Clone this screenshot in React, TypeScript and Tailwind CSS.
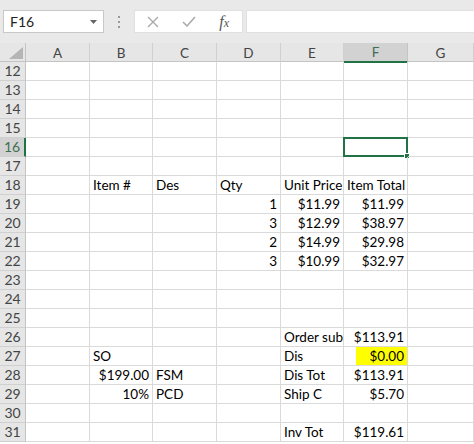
import React from 'react';

const COLS = ['A', 'B', 'C', 'D', 'E', 'F', 'G'];
const GRID = 'grid grid-cols-[26px_64px_63px_64px_64px_63px_64px_1fr]';

type Cell = { v: string; right?: boolean; yellow?: boolean };
type RowData = { [col: string]: Cell };

const data: { [row: number]: RowData } = {
  18: {
    B: { v: 'Item #' },
    C: { v: 'Des' },
    D: { v: 'Qty' },
    E: { v: 'Unit Price' },
    F: { v: 'Item Total' },
  },
  19: { D: { v: '1', right: true }, E: { v: '$11.99', right: true }, F: { v: '$11.99', right: true } },
  20: { D: { v: '3', right: true }, E: { v: '$12.99', right: true }, F: { v: '$38.97', right: true } },
  21: { D: { v: '2', right: true }, E: { v: '$14.99', right: true }, F: { v: '$29.98', right: true } },
  22: { D: { v: '3', right: true }, E: { v: '$10.99', right: true }, F: { v: '$32.97', right: true } },
  26: { E: { v: 'Order sub' }, F: { v: '$113.91', right: true } },
  27: { B: { v: 'SO' }, E: { v: 'Dis' }, F: { v: '$0.00', right: true, yellow: true } },
  28: {
    B: { v: '$199.00', right: true },
    C: { v: 'FSM' },
    E: { v: 'Dis Tot' },
    F: { v: '$113.91', right: true },
  },
  29: {
    B: { v: '10%', right: true },
    C: { v: 'PCD' },
    E: { v: 'Ship C' },
    F: { v: '$5.70', right: true },
  },
  31: { E: { v: 'Inv Tot' }, F: { v: '$119.61', right: true } },
};

// rows 12..31 are visible
const rows = Array.from({ length: 20 }, (_, i) => 12 + i);

const Toolbar = () => (
  <div className="h-[43px] bg-[#e9e9e9] flex items-start pt-[10px] pl-[3px]">
    <div className="w-[101px] h-[23px] bg-white border border-[#c8c8c8] flex items-center justify-between pl-[6px] pr-[6px]">
      <span className="text-[14px] leading-none text-[#222]">F16</span>
      <svg width="7" height="4" viewBox="0 0 7 4">
        <path d="M0 0h7L3.5 4z" fill="#666" />
      </svg>
    </div>
    <div className="w-[30px] h-[23px] flex flex-col items-center justify-center gap-[3px]">
      <span className="w-[2px] h-[2px] bg-[#9a9a9a]" />
      <span className="w-[2px] h-[2px] bg-[#9a9a9a]" />
      <span className="w-[2px] h-[2px] bg-[#9a9a9a]" />
    </div>
    <div className="w-[109px] h-[23px] bg-white border border-[#e0e0e0] flex items-center">
      <div className="w-[36px] flex justify-center">
        <svg width="12" height="12" viewBox="0 0 12 12">
          <path d="M1 1l10 10M11 1L1 11" stroke="#a8a8a8" strokeWidth="1.3" />
        </svg>
      </div>
      <div className="w-[36px] flex justify-center">
        <svg width="14" height="11" viewBox="0 0 14 11">
          <path d="M1 6l4 4 8-9" stroke="#a8a8a8" strokeWidth="1.5" fill="none" />
        </svg>
      </div>
      <div className="w-[36px] flex justify-center">
        <span className="text-[16px] italic text-[#555] font-['Liberation_Serif',serif] leading-none">
          f<span className="text-[12px]">x</span>
        </span>
      </div>
    </div>
    <div className="flex-1 ml-[3px] h-[23px] bg-white border border-[#e0e0e0] border-r-0" />
  </div>
);

const HeaderRow = () => (
  <div className={`${GRID} h-[19px] bg-[#e6e6e6] border-b border-[#c4c4c4] leading-[18px]`}>
    <div className="relative border-r border-[#c4c4c4]">
      <svg className="absolute right-[2px] bottom-[3px]" width="14" height="12" viewBox="0 0 14 12">
        <path d="M14 0V12H0z" fill="#b5b5b5" />
      </svg>
    </div>
    {COLS.map((c) =>
      c === 'F' ? (
        <div
          key={c}
          className="flex items-center justify-center bg-[#d2d2d2] border-r border-[#c4c4c4] border-b-2 border-b-[#217346] text-[#3f6f52] -mb-px"
        >
          {c}
        </div>
      ) : (
        <div key={c} className="flex items-center justify-center border-r border-[#d0d0d0] text-[#444]">
          {c}
        </div>
      ),
    )}
  </div>
);

const SheetRow = ({ n }: { n: number }) => {
  const r = data[n] || {};
  const sel = n === 16;
  return (
    <div className={`${GRID} h-[19px] leading-[18px]`}>
      <div
        className={
          sel
            ? 'flex justify-center bg-[#d2d2d2] border-b border-[#d0d0d0] border-r-2 border-r-[#217346] text-[#3f6f52] text-[14px]'
            : 'flex justify-center bg-[#e6e6e6] border-b border-[#d0d0d0] border-r border-r-[#c4c4c4] text-[#444] text-[14px]'
        }
      >
        {n}
      </div>
      {COLS.map((c) => {
        const cell = r[c];
        const isSel = sel && c === 'F';
        return (
          <div
            key={c}
            className={`relative border-r border-b border-[#dadada] flex text-black ${
              cell?.right ? 'justify-end' : 'justify-start'
            }`}
          >
            {cell?.yellow && <div className="absolute left-[12px] right-0 top-0 bottom-0 bg-[#ffff00]" />}
            {cell && <span className="relative px-[3px] whitespace-nowrap">{cell.v}</span>}
            {isSel && (
              <div className="absolute -left-px -top-px -right-px -bottom-px border-2 border-[#217346]">
                <div className="absolute -right-[4px] -bottom-[4px] w-[6px] h-[6px] bg-[#217346] border border-white" />
              </div>
            )}
          </div>
        );
      })}
    </div>
  );
};

export default function App() {
  return (
    <div className="w-[474px] h-[444px] overflow-hidden bg-white font-['Lato','Open_Sans',sans-serif] text-[13.5px]">
      <Toolbar />
      <HeaderRow />
      {rows.map((n) => (
        <SheetRow key={n} n={n} />
      ))}
    </div>
  );
}
